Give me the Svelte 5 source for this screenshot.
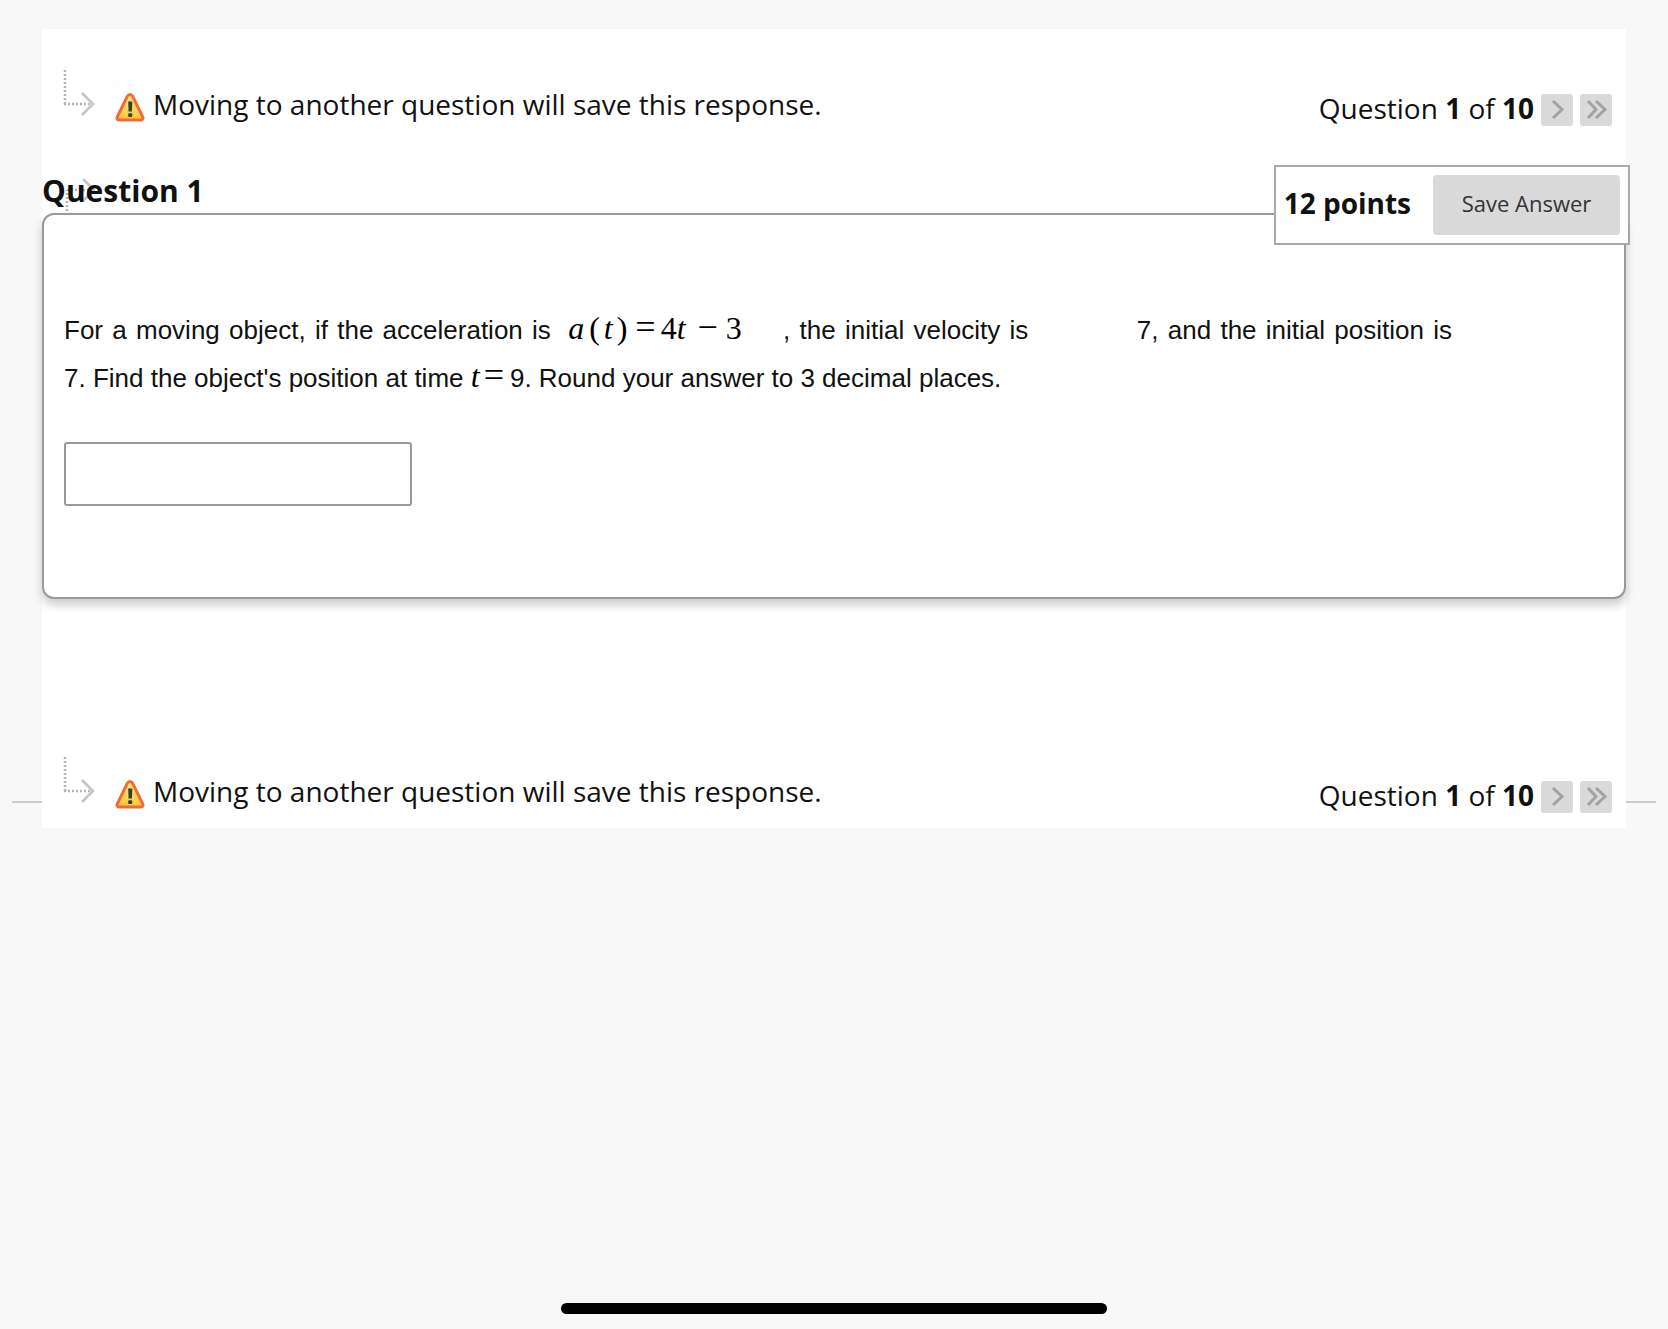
<script>
  let answer = $state('');
  const current = 1;
  const total = 10;
</script>

{#snippet navRow()}
  <div class="nav-row">
    <svg class="elbow" width="34" height="46" viewBox="0 0 34 46" aria-hidden="true">
      <path class="dots" d="M3 0V34M2 34H31" />
      <path class="head" d="M20 23L31 34L20 45" />
    </svg>
    <svg class="warn" width="30" height="30" viewBox="0 0 30 30" role="img" aria-label="Warning">
      <defs>
        <linearGradient id="warnFill" x1="0" y1="0" x2="0" y2="1">
          <stop offset="0" stop-color="#fbe58a" />
          <stop offset="1" stop-color="#fac934" />
        </linearGradient>
      </defs>
      <path class="tri" d="M15 2.5C16 2.5 17 3 17.600 4.200L27.700 24.800C28.500 26.500 27.800 28 26 28H4C2.200 28 1.500 26.500 2.300 24.800L12.400 4.200C13 3 14 2.500 15 2.500Z" fill="url(#warnFill)" />
      <path class="mark" d="M13.200 9.500H17.300L16.900 19.500H13.600Z" />
      <rect class="mark" x="13.200" y="21.300" width="4" height="3.600" rx="1" />
    </svg>
    <p class="note">Moving to another question will save this response.</p>
    <div class="pager">
      <span>Question <b>{current}</b> of <b>{total}</b></span>
      <button class="step" aria-label="Next question">
        <svg width="32" height="32" viewBox="0 0 32 32"><path d="M12 7L21 15.500L12 24" /></svg>
      </button>
      <button class="step" aria-label="Last question">
        <svg width="32" height="32" viewBox="0 0 32 32"><path d="M8 7L16 15.500L8 24M16 7L25 15.500L16 24" /></svg>
      </button>
    </div>
  </div>
{/snippet}

<div class="page">
  <main class="panel">
    {@render navRow()}

    <section class="question">
      <header class="title-row">
        <svg class="elbow-up" width="32" height="34" viewBox="0 0 32 34" aria-hidden="true">
          <path class="dots" d="M2 33V12M2 12H29" />
          <path class="head" d="M18 1L29 12L18 23" />
        </svg>
        <h1>Question 1</h1>
      </header>
      <div class="card">
        <div class="points">
          <strong>12 points</strong>
          <button class="save">Save Answer</button>
        </div>
        <p class="prompt">
          For a moving object, if the acceleration is
          <span class="formula"><i>a</i><span class="arg">(<i>t</i>)</span><span class="eq">=</span>4<i>t</i><span class="minus">−</span>3</span>
          , the initial velocity is <span class="blank"></span> 7, and the initial position is
          7.&nbsp;Find the object's position at time <i class="var">t</i><span class="equals">=</span>&#8288;9. Round your answer to 3 decimal places.
        </p>
        <input class="answer" type="text" aria-label="Answer" bind:value={answer} />
      </div>
    </section>

    {@render navRow()}
  </main>
  <div class="home-bar"></div>
</div>

<style>
  :global(body) {
    background: #f8f8f8;
  }
  .page {
    box-sizing: border-box;
    display: flex;
    flex-direction: column;
    justify-content: space-between;
    min-height: 100vh;
    padding: 29px 42px 15px;
    font-family: 'Open Sans', sans-serif;
    font-size: 28px;
    line-height: 40px;
    color: #111;
  }
  .panel {
    position: relative;
    background: #fff;
  }
  .panel::before,
  .panel::after {
    content: '';
    position: absolute;
    bottom: 25px;
    width: 30px;
    height: 2px;
    background: #ccc;
  }
  .panel::before {
    right: 100%;
  }
  .panel::after {
    left: 100%;
  }
  .nav-row {
    box-sizing: border-box;
    display: flex;
    align-items: flex-start;
    height: 112px;
    padding: 41px 14px 0 20px;
  }
  .dots {
    fill: none;
    stroke: #b4b4b4;
    stroke-width: 2.500;
    stroke-dasharray: 2 2;
  }
  .head {
    fill: none;
    stroke: #c4c4c4;
    stroke-width: 2.500;
  }
  .warn {
    margin: 22px 8px 0 19px;
  }
  .tri {
    stroke: #f26a36;
    stroke-width: 3;
  }
  .mark {
    fill: #3a3a30;
  }
  .note {
    flex: 1;
    margin: 14px 0 0;
  }
  .pager {
    display: flex;
    align-items: center;
    gap: 7px;
    margin-top: 18px;
  }
  .step {
    display: block;
    width: 32px;
    height: 32px;
    margin-top: 4px;
    padding: 0;
    border: 0;
    border-radius: 3px;
    background: #dadada;
  }
  .step svg {
    display: block;
  }
  .step path {
    fill: none;
    stroke: #a2a2a2;
    stroke-width: 3;
  }
  .question {
    height: 575px;
  }
  .title-row {
    position: relative;
    padding: 30px 0 2px;
  }
  .elbow-up {
    position: absolute;
    left: 23px;
    top: 37px;
  }
  h1 {
    position: relative;
    margin: 0;
    font-size: 30px;
    line-height: 40px;
  }
  .card {
    box-sizing: border-box;
    position: relative;
    min-height: 386px;
    padding: 91px 172px 90px 20px;
    border: 2px solid #999;
    border-radius: 12px;
    background: #fff;
    box-shadow: 0 6px 10px rgba(0, 0, 0, 0.2);
  }
  .points {
    position: absolute;
    top: -50px;
    right: -6px;
    display: flex;
    align-items: center;
    gap: 22px;
    padding: 8px;
    border: 2px solid #aaa;
    background: #fff;
  }
  .points strong {
    padding-bottom: 4px;
  }
  .save {
    width: 187px;
    height: 60px;
    padding: 0 0 5px;
    border: 0;
    border-radius: 4px;
    background: #dadada;
    font-family: inherit;
    font-size: 22px;
    color: #333;
  }
  .prompt {
    margin: 0;
    font-family: 'Liberation Sans', sans-serif;
    font-size: 26px;
    line-height: 48px;
    text-align: justify;
  }
  .formula,
  .var,
  .equals {
    font-family: 'Liberation Serif', serif;
    font-size: 32px;
    line-height: 32px;
    color: #000;
  }
  .formula {
    display: inline-block;
    margin: 0 32px 0 8px;
    text-align: left;
  }
  .arg {
    margin: 0 8px 0 5px;
  }
  .arg i {
    margin: 0 4px;
  }
  .eq,
  .minus,
  .equals {
    font-size: 36px;
  }
  .eq {
    margin-right: 5px;
  }
  .minus {
    margin: 0 8px 0 12px;
  }
  .equals {
    margin: 0 6px 0 4px;
  }
  .blank {
    display: inline-block;
    width: 90px;
  }
  .answer {
    box-sizing: border-box;
    display: block;
    width: 348px;
    height: 64px;
    margin-top: 40px;
    padding: 0 12px;
    border: 2px solid #999;
    border-radius: 3px;
    background: #fff;
    font-size: 26px;
  }
  .home-bar {
    align-self: center;
    width: 546px;
    height: 11px;
    border-radius: 6px;
    background: #000;
  }
</style>
